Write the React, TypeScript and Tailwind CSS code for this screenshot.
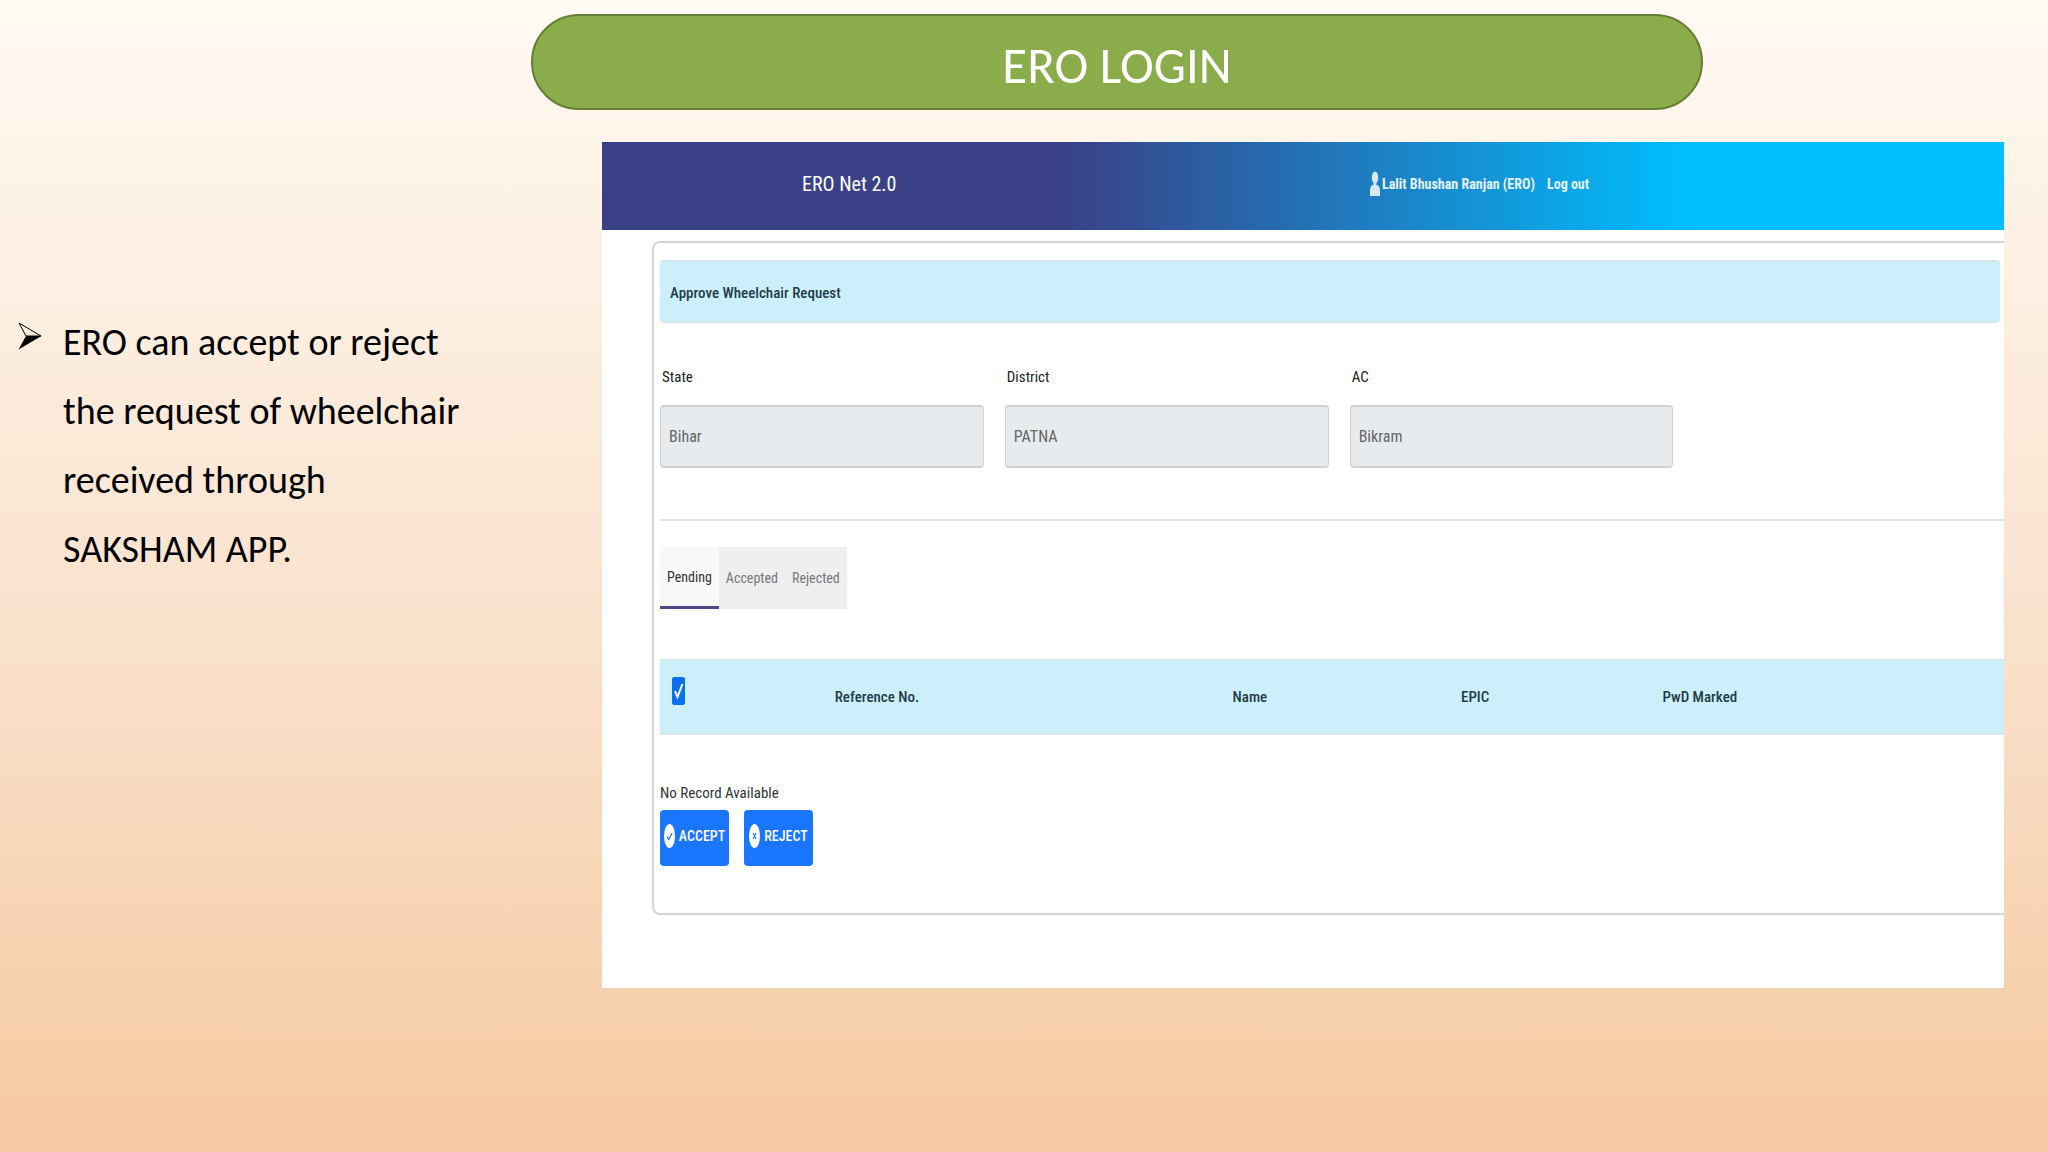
import React, { useState } from "react";

const tabs = ["Pending", "Accepted", "Rejected"];

const fields = [
  { id: "state", label: "State", value: "Bihar" },
  { id: "district", label: "District", value: "PATNA" },
  { id: "ac", label: "AC", value: "Bikram" },
];

function ArrowBullet() {
  return (
    <svg viewBox="0 0 24 28" className="mt-3.5 h-7 w-6 shrink-0" aria-hidden="true">
      <path d="M1 1 L23 14 L8 14 Z" fill="none" stroke="#000" strokeWidth="1" />
      <path d="M8 14 H23.5 L0.5 27.5 Z" fill="#000" />
    </svg>
  );
}

function UserIcon() {
  return (
    <svg viewBox="0 0 10 26" className="h-[26px] w-2.5" fill="#d3e9f8" aria-hidden="true">
      <ellipse cx="5" cy="6.5" rx="3.2" ry="6" />
      <path d="M3.6 11 H6.4 V15 H3.6 Z" />
      <path d="M0 25 V20 C0 16 1.5 14.5 3 14 H7 C8.5 14.5 10 16 10 20 V25 Z" />
    </svg>
  );
}

function AcceptIcon() {
  return (
    <svg viewBox="0 0 11 24" className="h-6 w-[11px] shrink-0" aria-hidden="true">
      <ellipse cx="5.5" cy="12" rx="5.5" ry="12" fill="#fff" />
      <path d="M3 12.5 L4.8 15.5 L8 9" fill="none" stroke="#1a75ff" strokeWidth="1.3" />
    </svg>
  );
}

function RejectIcon() {
  return (
    <svg viewBox="0 0 11 24" className="h-6 w-[11px] shrink-0" aria-hidden="true">
      <ellipse cx="5.5" cy="12" rx="5.5" ry="12" fill="#fff" />
      <path d="M4 9 L7 15 M7 9 L4 15" fill="none" stroke="#1a75ff" strokeWidth="1.1" />
    </svg>
  );
}

export default function App() {
  const [tab, setTab] = useState("Pending");
  const [all, setAll] = useState(true);

  return (
    <main className="min-h-screen bg-linear-to-b from-[#fffaf3] via-[#fae4d0] to-[#f5c9a1] pt-3.5 font-['Carlito','Lato',sans-serif]">
      <div className="pr-[345px] pl-[531px]">
        <h1 className="flex h-24 items-center justify-center rounded-full border-2 border-[#667d35] bg-[#8bac4a] pt-1.5 text-[51px] leading-none text-white">
          ERO LOGIN
        </h1>
      </div>

      <div className="mt-8 flex items-start pr-11">
        <ul className="w-[602px] shrink-0 pt-[166px] pl-[18px]">
          <li className="flex gap-[21px]">
            <ArrowBullet />
            <p className="w-[410px] text-[38px] leading-[69px] text-black">
              ERO can accept or reject the request of wheelchair received through SAKSHAM APP.
            </p>
          </li>
        </ul>

        <section className="min-w-0 flex-1 bg-white pb-[73px] font-['Roboto_Condensed','Roboto',sans-serif]">
          <header className="flex h-[88px] items-center bg-linear-to-r/srgb from-[#3a4187] from-33% to-[#00bfff] to-78% pb-1 text-white">
            <span className="w-[768px] pl-[200px] text-xl">ERO Net 2.0</span>
            <span className="flex items-center gap-0.5 text-sm font-bold text-[#e3f3fc]">
              <UserIcon />
              Lalit Bhushan Ranjan (ERO)
            </span>
            <a href="#logout" className="ml-3 text-sm font-bold text-[#e3f3fc]">
              Log out
            </a>
          </header>

          <div className="mt-[11px] ml-[50px] rounded-l-lg border-y-2 border-l-2 border-[#d6d6d6] pt-[17px] pb-[47px] pl-1.5">
            <h2 className="mr-1 flex h-[63px] items-center rounded-sm border-y-2 border-[#d5e8ec] bg-[#cbf0fc] px-2.5 pt-1 text-[15px] font-medium text-[#243c46]">
              Approve Wheelchair Request
            </h2>

            <form className="mt-[42px] grid w-[76%] grid-cols-3 gap-[21px] pr-2">
              {fields.map((f) => (
                <div key={f.id}>
                  <label htmlFor={f.id} className="block h-10 pl-0.5 text-[15px] leading-6 text-[#222]">
                    {f.label}
                  </label>
                  <input
                    id={f.id}
                    readOnly
                    defaultValue={f.value}
                    className="h-[63px] w-full rounded-sm border border-y-2 border-[#cfd2d5] bg-[#e7ebee] px-2 text-base text-[#666]"
                  />
                </div>
              ))}
            </form>

            <hr className="mt-[51px] border-t-2 border-[#e6e6e6]" />

            <div role="tablist" className="mt-[26px] flex h-[62px] w-fit bg-[#efefef]">
              {tabs.map((t) => (
                <button
                  key={t}
                  role="tab"
                  aria-selected={tab === t}
                  onClick={() => setTab(t)}
                  className={
                    tab === t
                      ? "border-b-3 border-[#4b4a86] bg-[#f8f8f8] px-[7px] text-sm text-[#333]"
                      : "px-[7px] text-sm text-[#777]"
                  }
                >
                  {t}
                </button>
              ))}
            </div>

            <table className="mt-[50px] w-full table-fixed bg-[#cbf0fc] text-left text-[15px] text-[#243c46]">
              <thead>
                <tr className="h-[74px] border-y-2 border-[#d5e8ec]">
                  <th className="w-[13%] pl-3 align-top">
                    <span className="relative mt-4 block h-7 w-[13px]">
                      <input
                        type="checkbox"
                        aria-label="Select all requests"
                        checked={all}
                        onChange={() => setAll(!all)}
                        className="block h-7 w-[13px] appearance-none rounded-[2px] border border-[#0b6ff0] bg-white checked:bg-[#0b6ff0]"
                      />
                      <svg viewBox="0 0 13 28" className="pointer-events-none absolute inset-0 h-7 w-[13px]" aria-hidden="true">
                        <path d="M3 14 L5.5 20 L10.5 7" fill="none" stroke="#fff" strokeWidth="2" />
                      </svg>
                    </span>
                  </th>
                  <th className="w-[29.6%] font-medium">Reference No.</th>
                  <th className="w-[17%] font-medium">Name</th>
                  <th className="w-[15%] font-medium">EPIC</th>
                  <th className="font-medium">PwD Marked</th>
                </tr>
              </thead>
            </table>

            <p className="mt-[42px] text-[15px] leading-8 text-[#333]">No Record Available</p>
            <div className="mt-px flex gap-[15px]">
              <button className="flex h-14 w-[69px] items-center justify-center gap-1 rounded-sm bg-[#1a75ff] pb-1 text-sm font-medium text-white">
                <AcceptIcon />
                ACCEPT
              </button>
              <button className="flex h-14 w-[69px] items-center justify-center gap-1 rounded-sm bg-[#1a75ff] pb-1 text-sm font-medium text-white">
                <RejectIcon />
                REJECT
              </button>
            </div>
          </div>
        </section>
      </div>
    </main>
  );
}
